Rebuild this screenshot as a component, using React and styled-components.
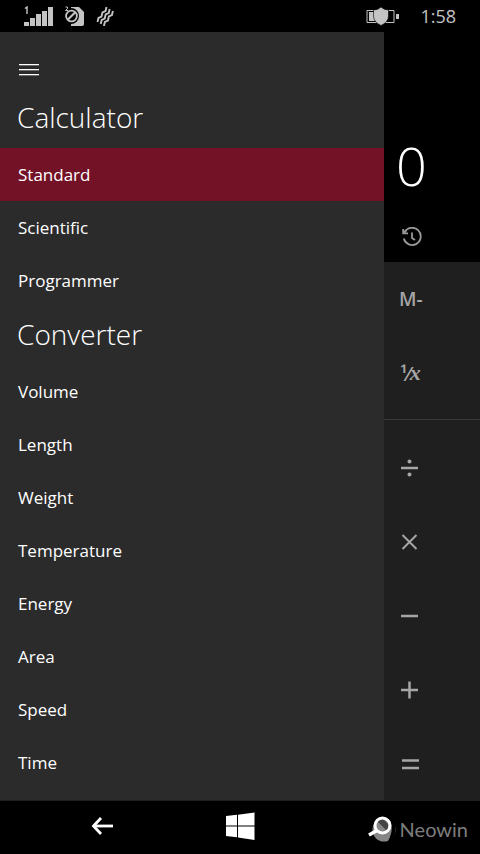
import { useState } from 'react';
import styled, { createGlobalStyle } from 'styled-components';

const GlobalStyle = createGlobalStyle`
  * {
    box-sizing: border-box;
  }
  body {
    margin: 0;
    background: #000000;
    color: #ffffff;
    font-family: 'Open Sans', 'Noto Sans', sans-serif;
  }
  svg {
    display: block;
    flex: none;
  }
`;

const Phone = styled.div`
  display: flex;
  flex-direction: column;
  min-height: 100vh;
`;

const StatusBar = styled.header`
  display: flex;
  justify-content: space-between;
  align-items: center;
  height: 32px;
  padding: 0 24px;
  color: #c4c4c4;
`;
const StatusGroup = styled.div`
  display: flex;
  align-items: center;
  gap: ${(props) => props.$gap}px;
`;
const Clock = styled.time`
  font-size: 18px;
  line-height: 32px;
`;

const BaseButton = styled.button`
  display: flex;
  align-items: center;
  padding: 0;
  border: 0;
  background: none;
  color: inherit;
  font-family: inherit;
  cursor: pointer;
`;

const Main = styled.main`
  display: grid;
  grid-template-columns: 4fr 1fr;
  flex: 1;
`;

const Drawer = styled.nav`
  padding-top: 16px;
  padding-bottom: 11px;
  background: #2b2b2b;
  border-bottom: 1px solid #1f1f1f;
`;
const MenuButton = styled(BaseButton)`
  width: 58px;
  height: 42px;
  padding-top: 2px;
  padding-left: 19px;
`;
const GroupTitle = styled.h2`
  margin: 0;
  padding-bottom: 4px;
  padding-left: 17px;
  font-size: 28px;
  font-weight: 300;
  line-height: 54px;
`;
const List = styled.ul`
  margin: 0;
  padding: 0;
  list-style: none;
`;
const Item = styled(BaseButton)`
  width: 100%;
  height: 53px;
  padding-left: 18px;
  background: ${(props) => (props.$active ? '#731227' : 'transparent')};
  font-size: 17px;
`;

const Calculator = styled.section`
  display: flex;
  flex-direction: column;
  background: #1f1f1f;
  color: #a6a6a6;
`;
const Display = styled.div`
  display: flex;
  flex-direction: column;
  height: 230px;
  padding-top: 95px;
  padding-left: 12px;
  background: #000000;
`;
const Result = styled.output`
  color: #ffffff;
  font-size: 54px;
  font-weight: 300;
  line-height: 76px;
`;
const HistoryButton = styled(BaseButton)`
  width: 52px;
  height: 59px;
  padding-top: 8px;
  padding-left: 6px;
`;
const Keys = styled.div`
  padding: ${(props) => (props.$top ? '0 0 9px' : '11px 0 0')};
  border-bottom: ${(props) => (props.$top ? '1px solid #3a3a3a' : '0')};
`;
const Key = styled(BaseButton)`
  width: 100%;
  height: 74px;
  padding-left: 15px;
  font-size: 19px;
  font-weight: 600;
`;
const Numerator = styled.span`
  padding-left: 1px;
  font-size: 20px;
`;
const Variable = styled.i`
  font-family: 'Liberation Serif', serif;
  font-size: 22px;
  font-weight: 700;
`;

const NavBar = styled.footer`
  display: grid;
  grid-template-columns: 138fr 138fr 159fr;
  align-items: start;
  height: 53px;
  padding: 0 12px 0 33px;
`;
const NavButton = styled(BaseButton)`
  justify-content: center;
  height: 50px;
`;
const Brand = styled.div`
  display: flex;
  justify-content: flex-end;
  align-items: center;
  gap: 4px;
  height: 56px;
  color: #7d7d7d;
  font-family: Lato, sans-serif;
  font-size: 20px;
  line-height: 24px;
`;

const SignalIcon = () => (
  <svg width="30" height="20" fill="currentColor">
    <path d="M0 16h5v4H0zM6 12h5v8H6zM12 8h5v12h-5zM18 5h5v15h-5zM24 1h5v19h-5z" />
    <path d="M1 2.5L3 1v7" fill="none" stroke="currentColor" strokeWidth="1.4" />
  </svg>
);

const SimIcon = () => (
  <svg width="20" height="20" fill="none" stroke="currentColor">
    <path d="M6 1h8l5 5v12q0 2-2 2H6z" fill="currentColor" stroke="none" />
    <circle cx="6" cy="10" r="8" fill="#000000" stroke="none" />
    <circle cx="6.5" cy="10" r="5.4" strokeWidth="1.8" />
    <path d="M3 13.500l7-7" strokeWidth="2.200" />
    <path d="M0.500 1h2v1.500L0.500 4.500H3" strokeWidth="1" />
  </svg>
);

const VibrateIcon = () => (
  <svg width="18" height="20" fill="none" stroke="currentColor" strokeWidth="1.900">
    <path d="M1.500 16l1-4 3-1.500 1-4 3-1.500 1-4M4.700 18l1-4 3-1.500 1-4 3-1.500 1-4M7.900 20l1-4 3-1.500 1-4 3-1.500 1-4" />
  </svg>
);

const BatteryIcon = () => (
  <svg width="34" height="20" fill="currentColor">
    <path d="M1 4.5h27v12H1z" fill="none" stroke="currentColor" />
    <path d="M3 6h6v9H3zM30 8h3v5h-3z" />
    <path
      d="M15 1q3 3 7.500 3v6q0 6-7.500 9.500Q7.500 16 7.500 10V4Q12 4 15 1z"
      stroke="#000000"
      strokeWidth="0.6"
    />
  </svg>
);

const MenuIcon = () => (
  <svg width="20" height="12" fill="#ffffff">
    <path d="M0 0h20v1H0zM0 5h20v1H0zM0 10h20v1H0z" />
    <path d="M0 1h20v1H0zM0 6h20v1H0zM0 11h20v1H0z" opacity="0.3" />
  </svg>
);

const HistoryIcon = () => (
  <svg width="21" height="20" fill="none" stroke="#999999" strokeWidth="1.8">
    <path d="M2.5 5.500a8.600 8.600 0 1 1-0.700 6" />
    <path d="M1.200 2v4.300h4.800" />
    <path d="M1.500 5.500l3-2" />
    <path d="M10 5.500v5.500l3 2" />
  </svg>
);

const operators = [
  {
    label: 'Divide',
    draw: (
      <>
        <path d="M1 10h17" />
        <circle cx="9.5" cy="3.5" r="2" fill="currentColor" stroke="none" />
        <circle cx="9.5" cy="16.5" r="2" fill="currentColor" stroke="none" />
      </>
    )
  },
  { label: 'Multiply', draw: <path d="M2.5 3l14 14M16.5 3l-14 14" strokeWidth="2" /> },
  { label: 'Subtract', draw: <path d="M1 10h17" /> },
  { label: 'Add', draw: <path d="M1 10h17M9.5 1.500v17" /> },
  { label: 'Equals', draw: <path d="M2 6.500h17M2 14h17" /> }
];

const BackIcon = () => (
  <svg width="22" height="18" fill="none" stroke="#ffffff" strokeWidth="2.8">
    <path d="M2 9h20" />
    <path d="M10 1L2.500 9l7.500 8" />
  </svg>
);

const WindowsIcon = () => (
  <svg width="30" height="28" viewBox="0 0 30 28" fill="#ffffff">
    <path d="M1 4l11-1.200v10.700H1zM13 2.700L29.500 0.500v13H13zM1 14.500h11v10.800L1 24zM13 14.500h16.500V28L13 25.400z" />
  </svg>
);

const SearchIcon = () => (
  <svg width="28" height="26" fill="none">
    <circle cx="16" cy="14" r="11.5" fill="#868686" />
    <path d="M21 2q6 11-1 23h4q7-11 0-22z" fill="#000000" />
    <circle cx="14.5" cy="9.5" r="6.500" fill="#868686" />
    <path d="M9 5l11 11V8l-6-6z" fill="#444444" />
    <circle cx="14.5" cy="9.5" r="7.5" stroke="#ffffff" strokeWidth="3" />
    <path d="M9 14.500l-8 4.500" stroke="#ffffff" strokeWidth="3.5" />
  </svg>
);

const groups = [
  { title: 'Calculator', items: ['Standard', 'Scientific', 'Programmer'] },
  {
    title: 'Converter',
    items: [
      'Volume',
      'Length',
      'Weight',
      'Temperature',
      'Energy',
      'Area',
      'Speed',
      'Time'
    ]
  }
];

function App() {
  const [mode, setMode] = useState('Standard');

  return (
    <Phone>
      <GlobalStyle />
      <StatusBar>
        <StatusGroup $gap={11}>
          <SignalIcon />
          <SimIcon />
          <VibrateIcon />
        </StatusGroup>
        <StatusGroup $gap={20}>
          <BatteryIcon />
          <Clock>1:58</Clock>
        </StatusGroup>
      </StatusBar>
      <Main>
        <Drawer>
          <MenuButton aria-label="Menu">
            <MenuIcon />
          </MenuButton>
          {groups.map((group) => (
            <div key={group.title}>
              <GroupTitle>{group.title}</GroupTitle>
              <List>
                {group.items.map((item) => (
                  <li key={item}>
                    <Item $active={item === mode} onClick={() => setMode(item)}>
                      {item}
                    </Item>
                  </li>
                ))}
              </List>
            </div>
          ))}
        </Drawer>
        <Calculator>
          <Display>
            <Result>0</Result>
            <HistoryButton aria-label="History">
              <HistoryIcon />
            </HistoryButton>
          </Display>
          <Keys $top>
            <Key>M-</Key>
            <Key aria-label="Reciprocal">
              <Numerator>¹⁄</Numerator>
              <Variable>x</Variable>
            </Key>
          </Keys>
          <Keys>
            {operators.map((op) => (
              <Key key={op.label} aria-label={op.label}>
                <svg
                  width="22"
                  height="20"
                  viewBox="-1 0 22 20"
                  fill="none"
                  stroke="currentColor"
                  strokeWidth="2.5"
                >
                  {op.draw}
                </svg>
              </Key>
            ))}
          </Keys>
        </Calculator>
      </Main>
      <NavBar>
        <NavButton aria-label="Back">
          <BackIcon />
        </NavButton>
        <NavButton aria-label="Start">
          <WindowsIcon />
        </NavButton>
        <Brand>
          <NavButton aria-label="Search">
            <SearchIcon />
          </NavButton>
          Neowin
        </Brand>
      </NavBar>
    </Phone>
  );
}
export default App;
